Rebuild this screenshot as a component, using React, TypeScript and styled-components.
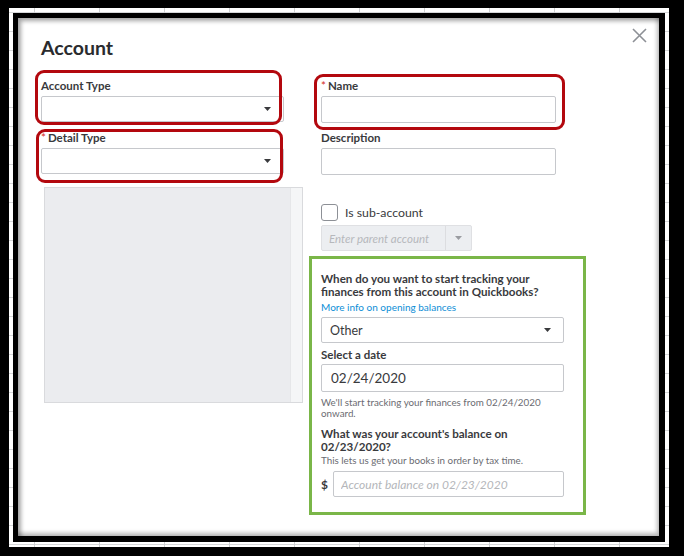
import styled, { createGlobalStyle } from "styled-components";

const GlobalStyle = createGlobalStyle`
    html, body {
        margin: 0;
        padding: 0;
        background: #000;
    }
    body {
        font-family: Lato, "Open Sans", sans-serif;
        color: #393a3d;
    }
    * {
        box-sizing: border-box;
    }
`;

const Caret = ({ light }: { light?: boolean }) => (
    <svg width="7" height="4" viewBox="0 0 7 4">
        <path d="M0 0 L7 0 L3.5 4 Z" fill={light ? "#9a9ca1" : "#393a3d"} />
    </svg>
);

const CloseIcon = () => (
    <svg width="15" height="15" viewBox="0 0 15 15">
        <path d="M1 1 L14 14 M14 1 L1 14" stroke="#8d9096" strokeWidth="1.6" fill="none" />
    </svg>
);

const App = () => {
    return <>
        <GlobalStyle />
        <Screen>
            <Sheet>
                <Modal>
                    <Header>
                        <Title>Account</Title>
                        <CloseButton aria-label="Close"><CloseIcon /></CloseButton>
                    </Header>

                    <Body>
                        {/* left column */}
                        <Column>
                            <FieldGroup>
                                <Label>Account Type</Label>
                                <SelectBox><span /><Caret /></SelectBox>
                                <Highlight $top={-8} $left={-6} $right={2} $bottom={-3} />
                            </FieldGroup>

                            <FieldGroup $gap={8}>
                                <Label><Required>*</Required>Detail Type</Label>
                                <SelectBox><span /><Caret /></SelectBox>
                                <Highlight $top={-1} $left={-5} $right={1} $bottom={-9} />
                            </FieldGroup>

                            <DescriptionPanel>
                                <ScrollTrack />
                            </DescriptionPanel>
                        </Column>

                        {/* right column */}
                        <Column>
                            <FieldGroup $width={235}>
                                <Label><Required>*</Required>Name</Label>
                                <TextInput />
                                <Highlight $top={-4} $left={-7} $right={-9} $bottom={-7} />
                            </FieldGroup>

                            <FieldGroup $gap={7} $width={235}>
                                <Label>Description</Label>
                                <TextInput />
                            </FieldGroup>

                            <CheckRow>
                                <CheckBox />
                                <span>Is sub-account</span>
                            </CheckRow>

                            <ParentSelect>
                                <ParentText>Enter parent account</ParentText>
                                <ParentToggle><Caret light /></ParentToggle>
                            </ParentSelect>

                            <OpeningBox>
                                <Question>
                                    When do you want to start tracking your finances from this account in Quickbooks?
                                </Question>
                                <InfoLink href="#">More info on opening balances</InfoLink>
                                <SelectBox $top={3}>
                                    <span>Other</span>
                                    <Caret />
                                </SelectBox>
                                <SubLabel>Select a date</SubLabel>
                                <DateInput defaultValue="02/24/2020" />
                                <Hint $top={4.5}>We'll start tracking your finances from 02/24/2020 onward.</Hint>
                                <BalanceQuestion>What was your account's balance on 02/23/2020?</BalanceQuestion>
                                <Hint $top={2}>This lets us get your books in order by tax time.</Hint>
                                <BalanceRow>
                                    <Dollar>$</Dollar>
                                    <BalanceInput placeholder="Account balance on 02/23/2020" />
                                </BalanceRow>
                            </OpeningBox>
                        </Column>
                    </Body>
                </Modal>
            </Sheet>
        </Screen>
    </>
};

const Screen = styled.div`
    width: 684px;
    height: 556px;
    background: #000;
    padding: 8px 15px 9px 9px;
`

// spreadsheet peeking out behind the dialog
const Sheet = styled.div`
    height: 100%;
    padding: 5px 4px 5px 4px;
    background-color: #fff;
    background-image: linear-gradient(to right, #cfd0d2 1px, transparent 1px),
        linear-gradient(to bottom, #d6d7d9 1px, transparent 1px);
    background-size: 65px 100%, 100% 19px;
    background-position: 25px 0, 0 4px;
`

const Modal = styled.div`
    height: 100%;
    border-style: solid;
    border-color: #000;
    border-width: 5px 6px 6px 5px;
    background: #fff;
    box-shadow: inset 3px 3px 4px rgba(0, 0, 0, 0.35), inset -2px -3px 4px rgba(0, 0, 0, 0.28);
    padding: 10px 12px 0 23px;
`

const Header = styled.div`
    display: flex;
    justify-content: space-between;
    align-items: flex-start;
`

const Title = styled.h2`
    margin: 8px 0 0;
    font-size: 19.5px;
    line-height: 24px;
    font-weight: 700;
    color: #2a2b2e;
`

const CloseButton = styled.button`
    border: none;
    background: none;
    padding: 0;
    width: 15px;
    height: 15px;
    display: flex;
`

const Body = styled.div`
    margin-top: 18px;
    display: grid;
    grid-template-columns: 262px 244px;
    column-gap: 18px;
    align-items: start;
`

const Column = styled.div`
    display: flex;
    flex-direction: column;
`

const FieldGroup = styled.div<{ $gap?: number; $width?: number }>`
    position: relative;
    margin-top: ${p => p.$gap ?? 0}px;
    width: ${p => p.$width ?? 243}px;
    display: flex;
    flex-direction: column;
`

// red annotation drawn over the screenshot
const Highlight = styled.span<{ $top: number; $left: number; $right: number; $bottom: number }>`
    position: absolute;
    top: ${p => p.$top}px;
    left: ${p => p.$left}px;
    right: ${p => p.$right}px;
    bottom: ${p => p.$bottom}px;
    border: 3px solid #b3080e;
    border-radius: 9px;
    pointer-events: none;
`

const Label = styled.label`
    font-size: 11.5px;
    line-height: 16px;
    font-weight: 700;
    color: #393a3d;
    margin-bottom: 2px;
`

const Required = styled.span`
    color: #d52b1e;
    font-weight: 400;
    margin-right: 2px;
`

const SelectBox = styled.div<{ $top?: number }>`
    margin-top: ${p => p.$top ?? 0}px;
    height: 26px;
    border: 1px solid #c6c8cc;
    border-radius: 2px;
    background: #fff;
    display: flex;
    align-items: center;
    justify-content: space-between;
    padding: 0 12px 0 8px;
    font-size: 12.5px;
    color: #393a3d;
`

const TextInput = styled.input`
    height: 27px;
    border: 1px solid #c6c8cc;
    border-radius: 2px;
    background: #fff;
    outline: none;
`

const DescriptionPanel = styled.div`
    margin: 13px 0 0 3px;
    width: 259px;
    height: 216px;
    background: #ebecef;
    border: 1px solid #d9dadd;
    display: flex;
    justify-content: flex-end;
`

const ScrollTrack = styled.div`
    width: 12px;
    background: #f5f6f7;
    border-left: 1px solid #e6e7e9;
`

const CheckRow = styled.label`
    margin-top: 29px;
    display: flex;
    align-items: center;
    gap: 7px;
    font-size: 12.3px;
    color: #393a3d;
`

const CheckBox = styled.span`
    width: 17px;
    height: 17px;
    border: 1.5px solid #8d9096;
    border-radius: 3px;
    background: #fff;
`

const ParentSelect = styled.div`
    margin-top: 4px;
    width: 151px;
    height: 26px;
    display: flex;
    background: #eceef1;
    border: 1px solid #dfe0e3;
    border-radius: 2px;
`

const ParentText = styled.span`
    flex: 1;
    display: flex;
    align-items: center;
    padding-left: 7px;
    font-size: 11.5px;
    font-style: italic;
    color: #b6b8bc;
    border-right: 1px solid #dcdde0;
`

const ParentToggle = styled.span`
    width: 25px;
    display: flex;
    align-items: center;
    justify-content: center;
`

// green annotation round the opening balance section
const OpeningBox = styled.div`
    margin: 5px -21px 0 -12px;
    border: 3px solid #7ab648;
    padding: 14px 19px 15px 9px;
    display: flex;
    flex-direction: column;
`

const Question = styled.div`
    font-size: 11.6px;
    line-height: 12.5px;
    font-weight: 700;
    color: #393a3d;
    padding-right: 8px;
`

const InfoLink = styled.a`
    margin-top: 3px;
    font-size: 10px;
    line-height: 13px;
    color: #0d8ed6;
    text-decoration: none;
`

const SubLabel = styled.div`
    margin-top: 5px;
    font-size: 11.5px;
    line-height: 14px;
    font-weight: 700;
    color: #393a3d;
`

const DateInput = styled.input`
    margin-top: 2px;
    height: 28px;
    border: 1px solid #c6c8cc;
    border-radius: 2px;
    padding: 0 0 0 9px;
    font-family: Lato, "Open Sans", sans-serif;
    font-size: 13.5px;
    color: #393a3d;
    outline: none;
`

const Hint = styled.div<{ $top: number }>`
    margin-top: ${p => p.$top}px;
    font-size: 9.8px;
    line-height: 11px;
    color: #6b6c72;
    padding-right: 20px;
`

const BalanceQuestion = styled.div`
    margin-top: 8px;
    font-size: 11.6px;
    line-height: 13px;
    font-weight: 700;
    color: #393a3d;
    padding-right: 40px;
`

const BalanceRow = styled.div`
    margin-top: 5.5px;
    display: flex;
    align-items: center;
    gap: 4px;
`

const Dollar = styled.span`
    width: 8px;
    font-size: 12px;
    font-weight: 700;
    color: #393a3d;
`

const BalanceInput = styled.input`
    flex: 1;
    height: 26px;
    border: 1px solid #c6c8cc;
    border-radius: 2px;
    padding: 0 0 0 7px;
    font-family: Lato, "Open Sans", sans-serif;
    font-size: 12px;
    outline: none;

    &::placeholder {
        font-style: italic;
        color: #b4b6ba;
    }
`

export default App;
